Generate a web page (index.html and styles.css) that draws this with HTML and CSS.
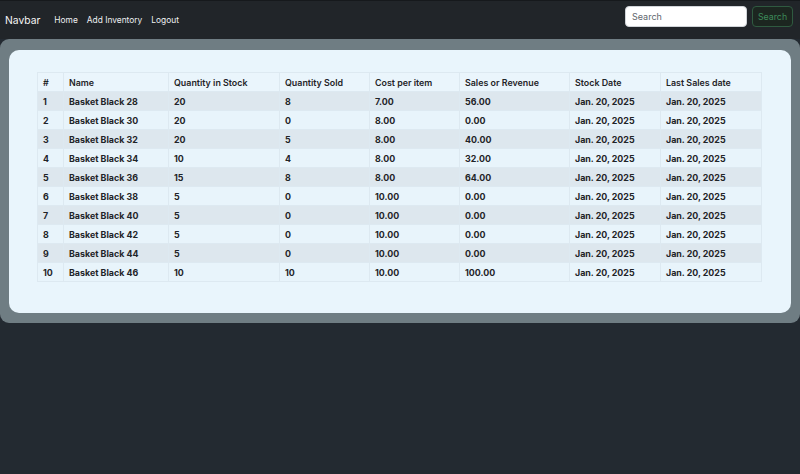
FILE: index.html
```html
<!DOCTYPE html>
<html>
<head>
<meta charset="utf-8">
<link rel="stylesheet" href="styles.css">
</head>
<body>
<nav class="navbar">
  <a class="brand">Navbar</a>
  <div class="links">
    <a>Home</a>
    <a>Add Inventory</a>
    <a>Logout</a>
  </div>
  <form class="search">
    <input class="search-input" type="text" placeholder="Search">
    <button class="search-btn" type="button">Search</button>
  </form>
</nav>
<main class="outer">
  <div class="card">
    <table class="tbl">
      <colgroup>
        <col class="c1"><col class="c2"><col class="c3"><col class="c4"><col class="c5"><col class="c6"><col class="c7"><col class="c8">
      </colgroup>
      <thead>
        <tr><th>#</th><th>Name</th><th>Quantity in Stock</th><th>Quantity Sold</th><th>Cost per item</th><th>Sales or Revenue</th><th>Stock Date</th><th>Last Sales date</th></tr>
      </thead>
      <tbody>
        <tr><td>1</td><td>Basket Black 28</td><td>20</td><td>8</td><td>7.00</td><td>56.00</td><td>Jan. 20, 2025</td><td>Jan. 20, 2025</td></tr>
        <tr><td>2</td><td>Basket Black 30</td><td>20</td><td>0</td><td>8.00</td><td>0.00</td><td>Jan. 20, 2025</td><td>Jan. 20, 2025</td></tr>
        <tr><td>3</td><td>Basket Black 32</td><td>20</td><td>5</td><td>8.00</td><td>40.00</td><td>Jan. 20, 2025</td><td>Jan. 20, 2025</td></tr>
        <tr><td>4</td><td>Basket Black 34</td><td>10</td><td>4</td><td>8.00</td><td>32.00</td><td>Jan. 20, 2025</td><td>Jan. 20, 2025</td></tr>
        <tr><td>5</td><td>Basket Black 36</td><td>15</td><td>8</td><td>8.00</td><td>64.00</td><td>Jan. 20, 2025</td><td>Jan. 20, 2025</td></tr>
        <tr><td>6</td><td>Basket Black 38</td><td>5</td><td>0</td><td>10.00</td><td>0.00</td><td>Jan. 20, 2025</td><td>Jan. 20, 2025</td></tr>
        <tr><td>7</td><td>Basket Black 40</td><td>5</td><td>0</td><td>10.00</td><td>0.00</td><td>Jan. 20, 2025</td><td>Jan. 20, 2025</td></tr>
        <tr><td>8</td><td>Basket Black 42</td><td>5</td><td>0</td><td>10.00</td><td>0.00</td><td>Jan. 20, 2025</td><td>Jan. 20, 2025</td></tr>
        <tr><td>9</td><td>Basket Black 44</td><td>5</td><td>0</td><td>10.00</td><td>0.00</td><td>Jan. 20, 2025</td><td>Jan. 20, 2025</td></tr>
        <tr><td>10</td><td>Basket Black 46</td><td>10</td><td>10</td><td>10.00</td><td>100.00</td><td>Jan. 20, 2025</td><td>Jan. 20, 2025</td></tr>
      </tbody>
    </table>
  </div>
</main>
</body>
</html>
```
FILE: styles.css
```css
html, body {
  margin: 0;
  padding: 0;
  background: #232a31;
  font-family: Inter, "Liberation Sans", Arial, sans-serif;
}
.navbar {
  height: 39px;
  box-sizing: border-box;
  border-top: 1px solid #16191c;
  background: #212529;
  display: flex;
  align-items: flex-start;
  padding: 0 7px 0 5px;
}
.brand {
  color: #f5f5f5;
  font-size: 10.3px;
  margin-right: 14px;
  margin-top: 13px;
}
.links {
  display: flex;
  gap: 9px;
  margin-top: 14px;
}
.links a {
  color: #eef0f2;
  font-size: 8.4px;
}
.search {
  display: flex;
  gap: 5px;
  margin: 5px 0 0 auto;
}
.search-input {
  width: 122px;
  height: 21px;
  box-sizing: border-box;
  border: 1px solid #d0d4d8;
  border-radius: 4px;
  background: #fff;
  padding: 0 6px;
  font-family: inherit;
  font-size: 9px;
  color: #333;
  outline: none;
}
.search-input::placeholder { color: #60666c; }
.search-btn {
  height: 21px;
  width: 41px;
  box-sizing: border-box;
  background: #1c2620;
  border: 1px solid #2f5a40;
  border-radius: 4px;
  color: #3d8a5a;
  font-family: inherit;
  font-size: 8.8px;
  padding: 0;
}
.outer {
  background: #6f7d83;
  border-radius: 9px;
  padding: 11px 9px 10px 9px;
}
.card {
  background: #e9f5fc;
  border-radius: 10px;
  padding: 22px 30px 31px 28px;
}
.tbl {
  width: 724px;
  table-layout: fixed;
  border-collapse: collapse;
  font-size: 8.9px;
  font-weight: 700;
  color: #1f2428;
}
.c1 { width: 26px; }
.c2 { width: 105px; }
.c3 { width: 111px; }
.c4 { width: 90px; }
.c5 { width: 90px; }
.c6 { width: 110px; }
.c7 { width: 91px; }
.c8 { width: 101px; }
.tbl th, .tbl td {
  height: 19px;
  box-sizing: border-box;
  padding: 0 5px;
  text-align: left;
  border: 1px solid #dde9f1;
  white-space: nowrap;
  overflow: hidden;
}
.tbl th {
  font-weight: 600;
  background: #eaf5fc;
}
.tbl tbody tr:nth-child(odd) td { background: #dde7ee; }
.tbl tbody tr:nth-child(even) td { background: #e8f4fb; }
```
